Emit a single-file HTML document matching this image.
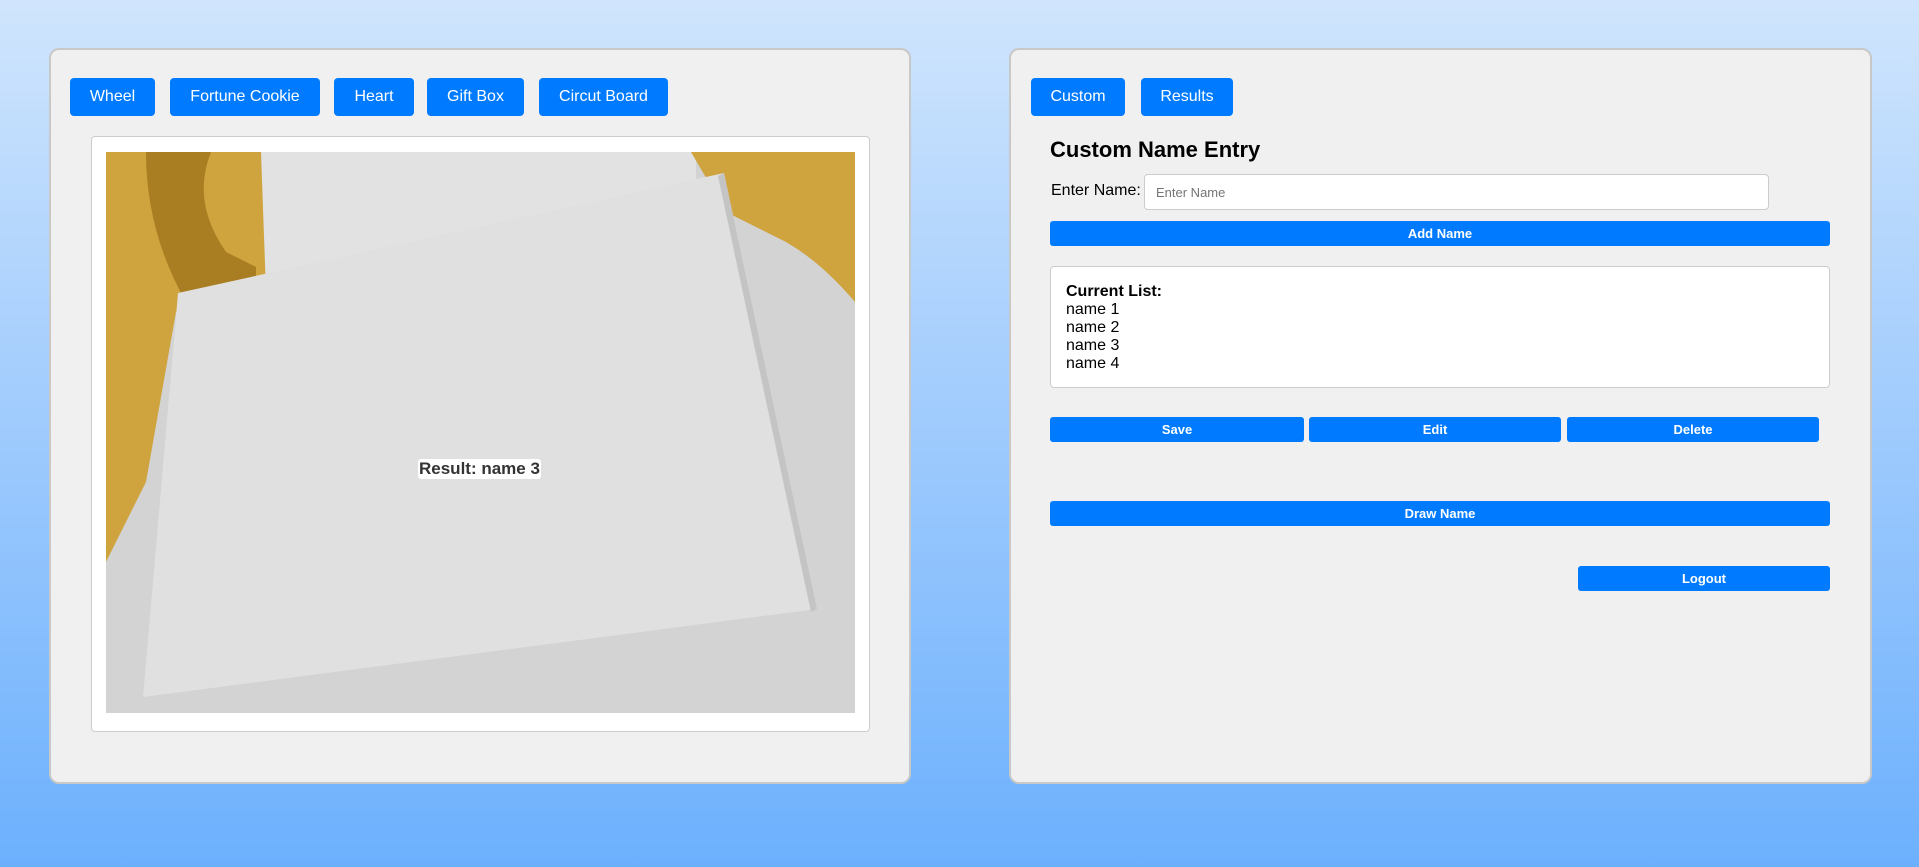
<!DOCTYPE html>
<html><head><meta charset="utf-8"><style>
*{box-sizing:border-box;margin:0;padding:0}
body{width:1919px;height:867px;overflow:hidden;background:linear-gradient(#d0e5fd,#6cb0fd);font-family:"Liberation Sans",Arial,sans-serif;position:relative}
.panel{position:absolute;top:48px;height:736px;background:#f0f0f0;border:2px solid #c8c8c8;border-radius:10px}
.b{position:absolute;background:#007bff;color:#fff;border-radius:4px;display:flex;align-items:center;justify-content:center}
.t{height:38px;top:78px;font-size:16px}
.s{font-size:13px;font-weight:bold;height:25px;border-radius:3px}
.a{position:absolute}
</style></head><body>
<div class="panel" style="left:49px;width:862px"></div>
<div class="b t" style="left:70px;width:85px">Wheel</div>
<div class="b t" style="left:170px;width:150px">Fortune Cookie</div>
<div class="b t" style="left:334px;width:80px">Heart</div>
<div class="b t" style="left:427px;width:97px">Gift Box</div>
<div class="b t" style="left:539px;width:129px">Circut Board</div>
<div class="a" style="left:91px;top:136px;width:779px;height:596px;background:#fff;border:1px solid #ccc;border-radius:4px"></div>
<svg class="a" style="left:106px;top:152px" width="749" height="561" viewBox="0 0 749 561">
<rect width="749" height="561" fill="#d3d3d3"/>
<rect x="150" y="0" width="440" height="180" fill="#e2e2e2"/>
<path d="M0 0H155L160 140L70 160L40 330L0 410Z" fill="#cfa43e"/>
<path d="M40 0H105Q85 50 120 100L150 115L150 140L80 150Q40 80 40 0Z" fill="#a97d22"/>
<path d="M585 0H749V150Q715 110 680 90L620 60Z" fill="#cfa43e"/>
<path d="M72 141L618 21L711 457L37 545Z" fill="#e0e0e0"/>
<path d="M618 21L711 457L705 460L612 24Z" fill="#c4c4c4"/>
</svg>
<div class="a" style="left:418px;top:459px;background:#fff;border-radius:3px;font-size:17px;font-weight:bold;color:#333;padding:0 1px;line-height:20px">Result: name 3</div>

<div class="panel" style="left:1009px;width:863px"></div>
<div class="b t" style="left:1031px;width:94px">Custom</div>
<div class="b t" style="left:1141px;width:92px">Results</div>
<div class="a" style="left:1050px;top:137px;font-size:22px;font-weight:bold">Custom Name Entry</div>
<div class="a" style="left:1051px;top:182px;font-size:16px">Enter Name:</div>
<div class="a" style="left:1144px;top:174px;width:625px;height:36px;background:#fff;border:1px solid #ccc;border-radius:4px;font-size:13px;color:#757575;padding:10px 0 0 11px">Enter Name</div>
<div class="b s" style="left:1050px;top:221px;width:780px">Add Name</div>
<div class="a" style="left:1050px;top:266px;width:780px;height:122px;background:#fff;border:1px solid #ccc;border-radius:4px;font-size:16px;line-height:18px;padding:16px 0 0 15px">
<b>Current List:</b><br>name 1<br>name 2<br>name 3<br>name 4</div>
<div class="b s" style="left:1050px;top:417px;width:254px">Save</div>
<div class="b s" style="left:1309px;top:417px;width:252px">Edit</div>
<div class="b s" style="left:1567px;top:417px;width:252px">Delete</div>
<div class="b s" style="left:1050px;top:501px;width:780px">Draw Name</div>
<div class="b s" style="left:1578px;top:566px;width:252px">Logout</div>
</body></html>
